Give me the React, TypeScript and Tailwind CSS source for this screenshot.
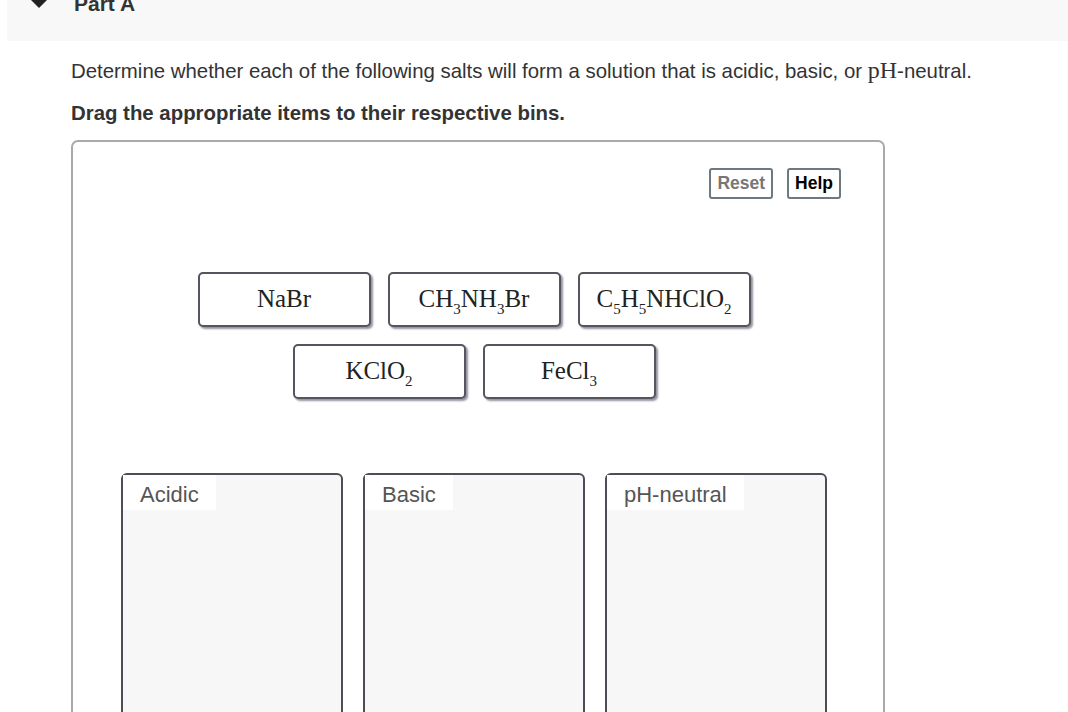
import React from 'react';

const serif = { fontFamily: '"Liberation Serif", "Times New Roman", serif' };

function Sub({ children }: { children: React.ReactNode }) {
    return <span className="relative top-[7px] text-[15px]">{children}</span>;
}

function Item({ children }: { children: React.ReactNode }) {
    return (
        <div
            className="w-[173px] h-[55px] flex items-center justify-center bg-white border-2 border-[#55555f] rounded-[5px] shadow-[2px_2px_2px_rgba(60,60,80,0.55)] text-[25px] text-[#222]"
            style={serif}
        >
            <span className="leading-none -mt-[2px]">{children}</span>
        </div>
    );
}

function Bin({ label }: { label: string }) {
    return (
        <div className="w-[222px] h-[260px] bg-[#f7f7f7] border-2 border-[#4d4d58] rounded-[6px]">
            <div className="inline-block bg-white px-[17px] h-[35px] leading-[40px] text-[22px] text-[#555]">{label}</div>
        </div>
    );
}

export default function App() {
    return (
        <div className="font-['Liberation_Sans',Arial,sans-serif] bg-white min-h-screen w-[1068px] overflow-hidden">
            {/* Part header, scrolled partly out of view */}
            <div className="ml-[7px] h-[41px] bg-[#f8f8f8] overflow-hidden">
                <div className="flex items-start -mt-[9px] pl-[23px]">
                    <svg width="18" height="18" viewBox="0 0 18 18">
                        <path d="M9 17 L1.5 9.5 Q0 8 1.5 6.5 L9 0 L16.5 6.5 Q18 8 16.5 9.5 Z" fill="#222" />
                    </svg>
                    <span className="ml-[26px] mt-[2px] text-[21px] font-bold text-[#333] leading-[21px]">Part A</span>
                </div>
            </div>

            <div className="pl-[71px] pt-[17px]">
                <p className="text-[20.4px] text-[#333] leading-[24px]">
                    Determine whether each of the following salts will form a solution that is acidic, basic, or{' '}
                    <span className="text-[24px]" style={serif}>pH</span>-neutral.
                </p>
                <p className="mt-[18px] text-[20.4px] font-bold text-[#333] leading-[24px]">
                    Drag the appropriate items to their respective bins.
                </p>

                <div className="mt-[15px] w-[814px] h-[640px] border-2 border-[#aaaaaa] rounded-[7px] pr-[8px]">
                    <div className="flex justify-end gap-[14px] pt-[26px] pr-[34px]">
                        <button className="h-[31px] px-[6px] border-2 border-[#6d7880] rounded-[3px] text-[17.5px] font-bold text-[#777]">Reset</button>
                        <button className="h-[31px] px-[6px] border-2 border-[#6d7880] rounded-[3px] text-[17.5px] font-bold text-black">Help</button>
                    </div>

                    <div className="flex flex-col items-center gap-[17px] mt-[73px]">
                        <div className="flex gap-[17px]">
                            <Item>NaBr</Item>
                            <Item>CH<Sub>3</Sub>NH<Sub>3</Sub>Br</Item>
                            <Item>C<Sub>5</Sub>H<Sub>5</Sub>NHClO<Sub>2</Sub></Item>
                        </div>
                        <div className="flex gap-[17px]">
                            <Item>KClO<Sub>2</Sub></Item>
                            <Item>FeCl<Sub>3</Sub></Item>
                        </div>
                    </div>

                    <div className="flex justify-center gap-[20px] mt-[74px]">
                        <Bin label="Acidic" />
                        <Bin label="Basic" />
                        <Bin label="pH-neutral" />
                    </div>
                </div>
            </div>
        </div>
    );
}
